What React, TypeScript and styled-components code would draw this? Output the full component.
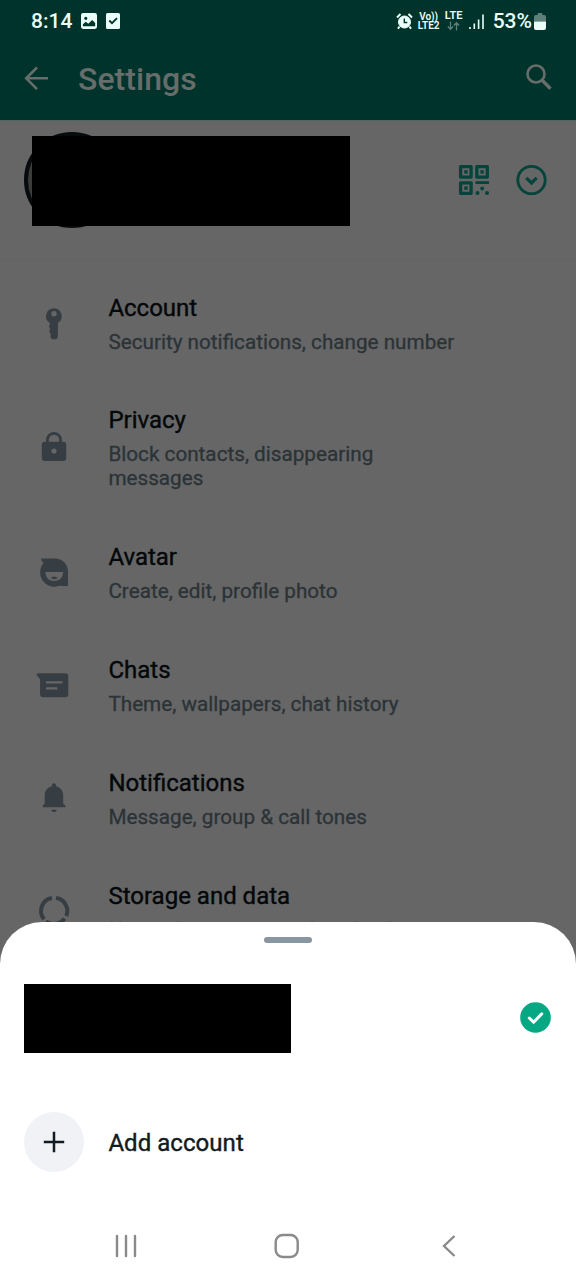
import React from "react";
import styled, { createGlobalStyle } from "styled-components";

const GlobalStyle = createGlobalStyle`
  * { box-sizing: border-box; }
  body { margin: 0; background: #666; font-family: Roboto, "Liberation Sans", sans-serif; }
`;

const Screen = styled.div`
  position: relative;
  width: 576px;
  height: 1280px;
  overflow: hidden;
  background: #666666;
`;

const Header = styled.header`
  height: 120px;
  background: #00332b;
`;

const StatusBar = styled.div`
  height: 42px;
  display: flex;
  align-items: center;
  justify-content: space-between;
  padding: 0 30px 0 31px;
  color: #eafff8;
`;

const StatusGroup = styled.div<{ $gap: number }>`
  display: flex;
  align-items: center;
  gap: ${(p) => p.$gap}px;
`;

const StatusText = styled.span`
  font-size: 21px;
  font-weight: 500;
  line-height: 42px;
`;

const NetworkLabel = styled.span<{ $width: number; $size: number }>`
  width: ${(p) => p.$width}px;
  display: flex;
  flex-direction: column;
  align-items: center;
  font-size: ${(p) => p.$size}px;
  font-weight: 600;
  line-height: 9.5px;
  white-space: nowrap;
`;

const AppBar = styled.div`
  height: 74px;
  display: flex;
  align-items: center;
  padding: 0 21px 0 22px;
  color: #666d6a;
`;

const PageTitle = styled.h1`
  flex: 1;
  margin: 0 0 0 26px;
  font-size: 32px;
  font-weight: 500;
  line-height: 38px;
  letter-spacing: 0.05px;
`;

const Profile = styled.section`
  height: 141px;
  display: flex;
  align-items: flex-start;
  padding: 12px 28px 0 24px;
  border-bottom: 1px solid #636363;
  box-shadow: inset 0 2px 1px -1px #54665f;
`;

const Photo = styled.div`
  position: relative;
  width: 96px;
  height: 96px;
  border-radius: 50%;
  border: 4px solid #080b0d;
  background: #3d3d38;
`;

const NameCover = styled.div`
  position: absolute;
  left: 4px;
  top: 0;
  width: 318px;
  height: 90px;
  background: #000;
`;

const ProfileActions = styled.div`
  height: 96px;
  margin-left: auto;
  display: flex;
  align-items: center;
  gap: 26px;
  color: #04443a;
`;

const List = styled.div`
  display: flex;
  flex-direction: column;
  gap: 52.9px;
  padding: 32.5px 108px 0 36px;
`;

const Item = styled.div`
  display: flex;
  align-items: center;
`;

const ItemIcon = styled.svg`
  flex: none;
  width: 36px;
  height: 36px;
  margin: -2px 36.4px 0 0;
  fill: #363e43;
  color: #363e43;
`;

const ItemText = styled.div`
  display: flex;
  flex-direction: column;
  gap: 8px;
`;

const ItemTitle = styled.div`
  font-size: 24px;
  line-height: 28px;
  color: #04080a;
  -webkit-text-stroke: 0.4px #04080a;
`;

const ItemDetail = styled.div`
  font-size: 20.7px;
  line-height: 24px;
  color: #2b3337;
  -webkit-text-stroke: 0.3px #2b3337;
`;

const Sheet = styled.section`
  position: absolute;
  left: 0;
  right: 0;
  bottom: 0;
  height: 358px;
  border-radius: 42px 42px 0 0;
  background: #fff;
  display: flex;
  flex-direction: column;
`;

const Handle = styled.div`
  width: 48px;
  height: 6px;
  margin: 15px auto 0;
  border-radius: 3px;
  background: #8796a0;
`;

const AccountRow = styled.div`
  display: flex;
  align-items: center;
  justify-content: space-between;
  margin-top: 41px;
  padding: 0 25px 0 24px;

  svg {
    margin-top: -3px;
  }
`;

const AccountCover = styled.div`
  width: 267px;
  height: 69px;
  background: #000;
`;

const AddRow = styled.div`
  display: flex;
  align-items: center;
  gap: 24.4px;
  margin-top: 59px;
  padding-left: 24px;
`;

const AddCircle = styled.div`
  width: 60px;
  height: 60px;
  border-radius: 50%;
  background: #f0f2f5;
  display: flex;
  align-items: center;
  justify-content: center;
`;

const AddLabel = styled.span`
  font-size: 24px;
  line-height: 28px;
  padding-top: 1px;
  letter-spacing: 0.05px;
  color: #111b21;
  -webkit-text-stroke: 0.4px #111b21;
`;

const NavBar = styled.nav`
  display: flex;
  align-items: center;
  justify-content: space-between;
  margin-top: 58px;
  padding: 0 112px 0 110px;
  color: #8a8a8a;
`;

const items = [
  {
    title: "Account",
    detail: "Security notifications, change number",
    icon: (
      <path
        fillRule="evenodd"
        d="M18 3.2a8 8 0 0 0-4.3 14.7v2.2l-1 1.3 1.2 1.6v2l-1 1.2 1.6 1.8v3.8a2.5 2.5 0 0 0 2.5 2.4h2.5a2.5 2.5 0 0 0 2.4-2.4V18A8 8 0 0 0 18 3.2zm0 2.8a2.7 2.7 0 1 1 0 5.4 2.7 2.7 0 0 1 0-5.4z"
      />
    ),
  },
  {
    title: "Privacy",
    detail: "Block contacts, disappearing messages",
    icon: (
      <path
        fillRule="evenodd"
        d="M10 12.7V11a8 8 0 0 1 16 0v1.7h1.2a3 3 0 0 1 3 3v13.2a3 3 0 0 1-3 3H8.8a3 3 0 0 1-3-3V15.7a3 3 0 0 1 3-3zm2.8 0h10.4V11a5.2 5.2 0 0 0-10.4 0zM18 19.4a2.6 2.6 0 1 0 0 5.2 2.6 2.6 0 0 0 0-5.2z"
      />
    ),
  },
  {
    title: "Avatar",
    detail: "Create, edit, profile photo",
    icon: (
      <path
        fillRule="evenodd"
        d="M5 4.500h14C26.500 4.500 32 10 32 18v14h-6.500c-1.500 0-1.600-.6-3 .1A14 14 0 0 1 4.200 18c0-3.500 1.200-6.500 3.400-9C6.500 7.500 5.300 7 5 4.500zM9.300 18c.4 5.800 4 9 8.900 9s8.700-3.200 9-9zm5.300 6c1.800-1.800 5.400-1.800 7.200 0-2 1.500-5.200 1.500-7.200 0z"
      />
    ),
  },
  {
    title: "Chats",
    detail: "Theme, wallpapers, chat history",
    icon: (
      <path
        fillRule="evenodd"
        d="M2.300 6.200h27a3 3 0 0 1 3 3v18a3 3 0 0 1-3 3H7.100a3 3 0 0 1-3-3V12.200L.8 8.200c-.7-.9.2-2 1.500-2zM10 14.300v2.300h16.500v-2.300zm0 6v2.300h11.300v-2.300z"
      />
    ),
  },
  {
    title: "Notifications",
    detail: "Message, group & call tones",
    icon: (
      <path d="M18 3.200c-1.300 0-2.100 1-2.100 2.400v.6c-4.500 1-7.200 4.700-7.200 9.300v8.300l-2 2v1.400h22.800v-1.400l-2.300-2v-8.300c0-4.600-2.600-8.300-7.100-9.300v-.6c0-1.400-.8-2.400-2.100-2.400zM15.200 29.800h5.600c-.5 1.600-1.400 2.300-2.800 2.300s-2.300-.7-2.800-2.300z" />
    ),
  },
  {
    title: "Storage and data",
    detail: "Network usage, auto-download",
    icon: (
      <g fill="none" stroke="currentColor" strokeWidth="4">
        <path d="M16 5.100A13 13 0 0 0 8 26.200" />
        <path d="M20 5.100A13 13 0 0 1 30.300 23" />
        <path d="M10 28.300A13 13 0 0 0 28.500 25.500" />
      </g>
    ),
  },
];

const App: React.FC = () => (
  <>
    <GlobalStyle />
    <Screen>
      <Header>
        <StatusBar>
          <StatusGroup $gap={9}>
            <StatusText>8:14</StatusText>
            <svg width="16" height="16" viewBox="0 0 15 15">
              <path
                fill="currentColor"
                fillRule="evenodd"
                d="M2 0h11a2 2 0 0 1 2 2v11a2 2 0 0 1-2 2H2a2 2 0 0 1-2-2V2a2 2 0 0 1 2-2zM1.800 12.500h11.500V9.300L10.500 6.500 6.800 10 4.500 8.300 1.800 10.500zM4.500 3.500a1.500 1.500 0 1 0 0 3 1.500 1.500 0 0 0 0-3z"
              />
            </svg>
            <svg width="14" height="16" viewBox="0 0 14 16">
              <rect width="14" height="16" rx="1.500" fill="currentColor" />
              <path d="M3.300 7.500 6 10.200l5-5" fill="none" stroke="#00332b" strokeWidth="1.800" />
            </svg>
          </StatusGroup>
          <StatusGroup $gap={5}>
            <svg width="17" height="17" viewBox="0 0 17 17">
              <circle cx="8.500" cy="9" r="6" fill="currentColor" stroke="currentColor" />
              <path d="M1 4.500 4.500 1M16 4.500 12.500 1M3.500 13.500 2 15.800M13.500 13.500l1.500 2.300" stroke="currentColor" strokeWidth="2" />
              <path d="M8.300 5.500v4h3" fill="none" stroke="#00332b" strokeWidth="1.400" />
            </svg>
            <NetworkLabel $width={22} $size={10}>
              <span>Vo))</span>
              <span>LTE2</span>
            </NetworkLabel>
            <NetworkLabel $width={18} $size={11}>
              <span>LTE</span>
              <svg width="13" height="10" viewBox="0 0 13 9" fill="none" stroke="#5d8178" strokeWidth="1.300">
                <path d="M3.500 0v7.500M.8 5l2.700 2.800L6.200 5M9.500 9V1.300M6.800 4l2.700-2.800L12.200 4" />
              </svg>
            </NetworkLabel>
            <svg width="17" height="17" viewBox="0 0 17 17" stroke="currentColor" strokeWidth="1.600">
              <path d="M2 14v2M6.300 10.500V16M10.600 6.500V16M15 1.500V16" />
            </svg>
            <StatusGroup $gap={2}>
              <svg width="1" height="17" />
              <StatusText>53%</StatusText>
              <svg width="12" height="17" viewBox="0 0 13 17" preserveAspectRatio="none">
                <path d="M4 0h5v2h2a2 2 0 0 1 2 2v4.500H0V4a2 2 0 0 1 2-2h2z" fill="#5d8178" />
                <path d="M0 8.500h13V15a2 2 0 0 1-2 2H2a2 2 0 0 1-2-2z" fill="currentColor" />
              </svg>
            </StatusGroup>
          </StatusGroup>
        </StatusBar>
        <AppBar>
          <svg width="30" height="30" viewBox="0 0 30 30" fill="none" stroke="currentColor" strokeWidth="2.600">
            <path d="M26 14.300H4.500M15 3.500 4.200 14.300 15 25.100" />
          </svg>
          <PageTitle>Settings</PageTitle>
          <svg width="32" height="32" viewBox="0 0 32 32" fill="none" stroke="currentColor" strokeWidth="2.600">
            <circle cx="13" cy="11" r="8.500" />
            <path d="m19 17 8.500 8.800" strokeWidth="3.400" />
          </svg>
        </AppBar>
      </Header>

      <Profile>
        <Photo>
          <NameCover />
        </Photo>
        <ProfileActions>
          <svg width="32" height="32" viewBox="0 0 32 32" fill="none" stroke="currentColor" strokeWidth="3.300" strokeLinejoin="round">
            <rect x="2.600" y="2.600" width="10.500" height="10.500" />
            <rect x="18.800" y="2.600" width="10.500" height="10.500" />
            <rect x="2.600" y="18.800" width="10.500" height="10.500" />
            <path d="M17.500 18.600h13.500" strokeWidth="2.800" />
            <g fill="currentColor" stroke="none">
              <rect x="6.200" y="6.200" width="3.400" height="3.400" />
              <rect x="22.400" y="6.200" width="3.400" height="3.400" />
              <rect x="6.200" y="22.400" width="3.400" height="3.400" />
              <circle cx="24.200" cy="24.500" r="1.900" />
              <circle cx="19.500" cy="29" r="2" />
              <circle cx="29" cy="29" r="2" />
            </g>
          </svg>
          <svg width="32" height="32" viewBox="0 0 32 32" fill="none" stroke="currentColor" strokeWidth="2.800">
            <circle cx="15.500" cy="16" r="13.700" />
            <path d="m10.300 13.800 5.200 5.200 5.200-5.200" strokeWidth="3.200" />
          </svg>
        </ProfileActions>
      </Profile>

      <List>
        {items.map((item) => (
          <Item key={item.title}>
            <ItemIcon viewBox="0 0 36 36">{item.icon}</ItemIcon>
            <ItemText>
              <ItemTitle>{item.title}</ItemTitle>
              <ItemDetail>{item.detail}</ItemDetail>
            </ItemText>
          </Item>
        ))}
      </List>

      <Sheet>
        <Handle />
        <AccountRow>
          <AccountCover />
          <svg width="31" height="31" viewBox="0 0 31 31">
            <circle cx="15.500" cy="15.500" r="15.300" fill="#06a884" />
            <path d="m9.300 16 4.300 4.300 8.200-8.500" fill="none" stroke="#fff" strokeWidth="3" strokeLinecap="round" strokeLinejoin="round" />
          </svg>
        </AccountRow>
        <AddRow>
          <AddCircle>
            <svg width="22" height="22" viewBox="0 0 22 22" stroke="#111b21" strokeWidth="2.500">
              <path d="M11 .8v20.400M.8 11h20.400" />
            </svg>
          </AddCircle>
          <AddLabel>Add account</AddLabel>
        </AddRow>
        <NavBar>
          <svg width="32" height="32" viewBox="0 0 32 32" stroke="currentColor" strokeWidth="2.400" strokeLinecap="round">
            <path d="M7 6v20M16 6v20M25 6v20" />
          </svg>
          <svg width="32" height="32" viewBox="0 0 32 32" fill="none" stroke="currentColor" strokeWidth="2.400">
            <rect x="4.700" y="5" width="22" height="22" rx="7" />
          </svg>
          <svg width="32" height="32" viewBox="0 0 32 32" fill="none" stroke="currentColor" strokeWidth="2.400">
            <path d="M22.500 6 12 16l10.500 10" />
          </svg>
        </NavBar>
      </Sheet>
    </Screen>
  </>
);

export default App;
